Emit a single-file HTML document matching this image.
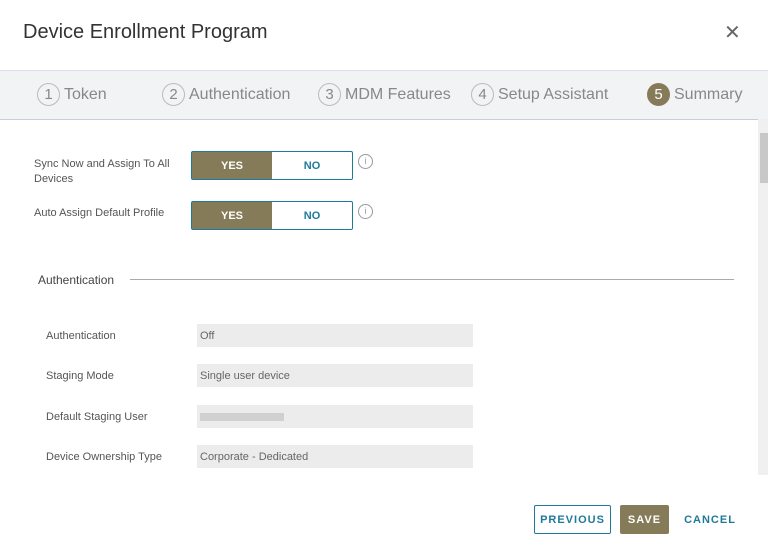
<!DOCTYPE html><html><head><style>
body{margin:0;width:768px;height:558px;background:#fff;font-family:"Liberation Sans",sans-serif;position:relative;overflow:hidden;color:#555}
.a{position:absolute}
.title{left:23px;top:21px;font-size:20px;color:#333}
.x{left:724px;top:20px;font-size:20px;color:#666;font-weight:300}
.steps{left:0;top:70px;width:768px;height:48px;background:#f2f3f4;border-top:1px solid #dde;border-bottom:1px solid #ccd}
.st{position:absolute;top:12px;font-size:16px;color:#888;display:flex;align-items:center}
.c{width:23px;height:23px;border:1px solid #bbb;border-radius:50%;display:inline-flex;align-items:center;justify-content:center;margin-right:4px;font-size:15px;box-sizing:border-box}
.c.on{background:#857b58;color:#fff;border-color:#857b58}
.lab{font-size:11px;color:#555}
.tg{width:162px;height:29px;border:1px solid #1f7a9a;border-radius:2px;display:flex;font-size:11px;font-weight:bold;box-sizing:border-box}
.tg span{flex:1;display:flex;align-items:center;justify-content:center;color:#1f7a9a}
.tg span.y{background:#857b58;color:#fff}
.i{width:13px;height:13px;border:1px solid #999;border-radius:50%;font-size:9px;text-align:center;line-height:13px;color:#999}
.fld{left:197px;width:276px;height:23px;background:#ececec;font-size:11px;color:#666;display:flex;align-items:center;padding-left:3px;box-sizing:border-box}
.btn{height:29px;font-size:11px;font-weight:bold;letter-spacing:1px;display:flex;align-items:center;justify-content:center;box-sizing:border-box;border-radius:2px}
</style></head><body>
<div class="a title">Device Enrollment Program</div>
<div class="a x">✕</div>
<div class="a steps">
<div class="st" style="left:37px"><span class="c">1</span>Token</div>
<div class="st" style="left:162px"><span class="c">2</span>Authentication</div>
<div class="st" style="left:318px"><span class="c">3</span>MDM Features</div>
<div class="st" style="left:471px"><span class="c">4</span>Setup Assistant</div>
<div class="st" style="left:647px"><span class="c on">5</span>Summary</div>
</div>
<div class="a" style="left:758px;top:119px;width:10px;height:356px;background:#f0f0f0"></div>
<div class="a" style="left:760px;top:133px;width:8px;height:50px;background:#c8c8c8"></div>
<div class="a lab" style="left:34px;top:157px;width:140px;line-height:15px">Sync Now and Assign To All Devices</div>
<div class="a tg" style="left:191px;top:151px"><span class="y">YES</span><span>NO</span></div>
<div class="a i" style="left:358px;top:154px">i</div>
<div class="a lab" style="left:34px;top:207px">Auto Assign Default Profile</div>
<div class="a tg" style="left:191px;top:201px"><span class="y">YES</span><span>NO</span></div>
<div class="a i" style="left:358px;top:204px">i</div>
<div class="a" style="left:38px;top:273px;font-size:12px;color:#444">Authentication</div>
<div class="a" style="left:130px;top:279px;width:604px;height:1px;background:#aaa"></div>
<div class="a lab" style="left:46px;top:330px">Authentication</div><div class="a fld" style="top:324px">Off</div>
<div class="a lab" style="left:46px;top:370px">Staging Mode</div><div class="a fld" style="top:364px">Single user device</div>
<div class="a lab" style="left:46px;top:411px">Default Staging User</div><div class="a fld" style="top:405px"><span style="display:inline-block;width:84px;height:8px;background:#d0d0d0"></span></div>
<div class="a lab" style="left:46px;top:451px">Device Ownership Type</div><div class="a fld" style="top:445px">Corporate - Dedicated</div>
<div class="a btn" style="left:534px;top:505px;width:77px;border:1px solid #1f7a9a;color:#1f7a9a">PREVIOUS</div>
<div class="a btn" style="left:620px;top:505px;width:49px;background:#857b58;color:#fff">SAVE</div>
<div class="a btn" style="left:682px;top:505px;width:56px;color:#1f7a9a">CANCEL</div>
</body></html>
